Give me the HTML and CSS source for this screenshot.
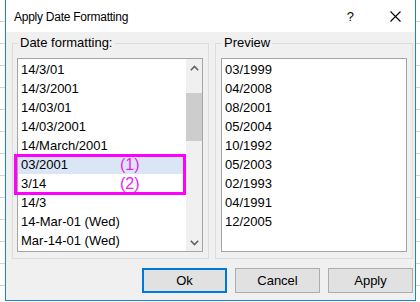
FILE: index.html
```html
<!DOCTYPE html>
<html>
<head>
<meta charset="utf-8">
<link rel="stylesheet" href="styles.css">
</head>
<body>
<div class="dialog">
  <div class="titlebar">
    <span class="title">Apply Date Formatting</span>
    <span class="help">?</span>
    <span class="close"><svg width="11" height="11" viewBox="0 0 11 11"><path d="M0.5 0.5 L10.5 10.5 M10.5 0.5 L0.5 10.5" stroke="#000" stroke-width="1.1" fill="none"/></svg></span>
  </div>
  <div class="content">
    <div class="groups">
      <fieldset class="group">
        <legend>Date formatting:</legend>
        <div class="listbox">
          <ul class="items">
            <li class="row">14/3/01</li>
            <li class="row">14/3/2001</li>
            <li class="row">14/03/01</li>
            <li class="row">14/03/2001</li>
            <li class="row">14/March/2001</li>
            <li class="row selected"><span class="val">03/2001</span><span class="mark">(1)</span></li>
            <li class="row"><span class="val">3/14</span><span class="mark">(2)</span></li>
            <li class="row">14/3</li>
            <li class="row">14-Mar-01 (Wed)</li>
            <li class="row">Mar-14-01 (Wed)</li>
          </ul>
          <div class="scrollbar">
            <span class="arrow"><svg width="9" height="6" viewBox="0 0 9 6"><path d="M0.8 5.2 L4.5 1.5 L8.2 5.2" stroke="#606060" stroke-width="1.6" fill="none"/></svg></span>
            <div class="track"><div class="thumb"></div></div>
            <span class="arrow"><svg width="9" height="6" viewBox="0 0 9 6"><path d="M0.8 0.8 L4.5 4.5 L8.2 0.8" stroke="#606060" stroke-width="1.6" fill="none"/></svg></span>
          </div>
          <div class="callout"></div>
        </div>
      </fieldset>
      <fieldset class="group group-right">
        <legend>Preview</legend>
        <div class="listbox">
          <ul class="items">
            <li class="row">03/1999</li>
            <li class="row">04/2008</li>
            <li class="row">08/2001</li>
            <li class="row">05/2004</li>
            <li class="row">10/1992</li>
            <li class="row">05/2003</li>
            <li class="row">02/1993</li>
            <li class="row">04/1991</li>
            <li class="row">12/2005</li>
          </ul>
        </div>
      </fieldset>
    </div>
    <div class="buttons">
      <button class="btn btn-default">Ok</button>
      <button class="btn">Cancel</button>
      <button class="btn">Apply</button>
    </div>
  </div>
</div>
</body>
</html>
```
FILE: styles.css
```css
* { box-sizing: border-box; }
html, body { margin: 0; padding: 0; }
body {
  width: 420px;
  height: 302px;
  overflow: hidden;
  background-color: #ffffff;
  background-image: repeating-linear-gradient(to bottom, transparent 0, transparent 21px, #d4d4d4 21px, #d4d4d4 22px);
  font-family: "Liberation Sans", Arial, sans-serif;
  font-size: 13px;
  color: #000;
}
.dialog {
  width: 411px;
  height: 301px;
  margin-left: 5px;
  border: 1px solid #1883d7;
  border-top: none;
  background: #f0f0f0;
  display: flex;
  flex-direction: column;
}
.titlebar {
  height: 32px;
  background: #fff;
  display: flex;
  align-items: center;
  padding: 0 14px 0 8px;
}
.title {
  flex: 1;
  font-size: 12px;
  letter-spacing: -0.25px;
  padding-top: 1px;
}
.help {
  font-size: 13px;
  margin-right: 36px;
  padding-top: 1px;
}
.close { display: flex; }
.content {
  flex: 1;
  display: flex;
  flex-direction: column;
  padding: 3px 2px 7px 6px;
}
.groups {
  display: flex;
  gap: 6px;
}
.group {
  margin: 0;
  width: 197px;
  border: 1px solid #dcdcdc;
  padding: 7px 5px 6px 4px;
  min-width: 0;
}
.group-right {
  width: 198px;
  padding-left: 5px;
}
legend {
  padding: 0 2px;
  margin-left: 1px;
  line-height: 16px;
  font-size: 13px;
}
.listbox {
  position: relative;
  height: 194px;
  border: 1px solid #a5a5a5;
  background: #fff;
  display: flex;
}
.items {
  list-style: none;
  margin: 0;
  padding: 1px 0 0 0;
  flex: 1;
}
.row {
  height: 19px;
  line-height: 19px;
  padding-left: 3px;
  white-space: nowrap;
  display: flex;
}
.row.selected { background: #dae5f6; }
.val { width: 99px; }
.mark {
  color: #ee22ee;
  font-size: 16px;
}
.scrollbar {
  width: 16px;
  background: #f0f0f0;
  display: flex;
  flex-direction: column;
}
.arrow {
  height: 17px;
  display: flex;
  align-items: center;
  justify-content: center;
}
.track { flex: 1; padding-top: 17px; }
.thumb { height: 48px; background: #cdcdcd; }
.callout {
  position: absolute;
  left: -4px;
  top: 95px;
  width: 172px;
  height: 41px;
  border: 3px solid #ff00ff;
}
.buttons {
  margin-top: 9px;
  display: flex;
  justify-content: flex-end;
  gap: 8px;
}
.btn {
  width: 85px;
  height: 25px;
  background: #e1e1e1;
  border: 1px solid #adadad;
  font-family: "Liberation Sans", Arial, sans-serif;
  font-size: 13px;
  color: #000;
  padding: 0;
}
.btn-default { border: 2px solid #0078d7; }
```
